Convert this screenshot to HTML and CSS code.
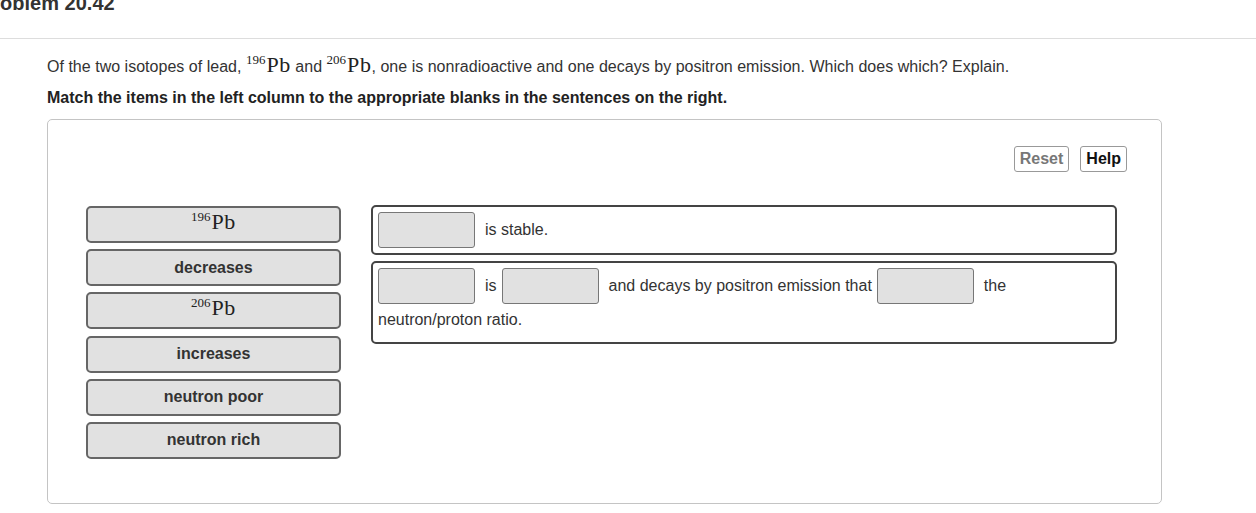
FILE: index.html
```html
<!DOCTYPE html>
<html>
<head>
<meta charset="utf-8">
<link rel="stylesheet" href="styles.css">
</head>
<body>
<header class="top">
  <h1 class="title">Problem 20.42</h1>
</header>
<main class="content">
  <p class="question">Of the two isotopes of lead, <span class="iso"><sup>196</sup>Pb</span> and <span class="iso"><sup>206</sup>Pb</span>, one is nonradioactive and one decays by positron emission. Which does which? Explain.</p>
  <p class="instr">Match the items in the left column to the appropriate blanks in the sentences on the right.</p>
  <section class="panel">
    <div class="toolbar">
      <button class="btn btn-reset">Reset</button>
      <button class="btn btn-help">Help</button>
    </div>
    <div class="work">
      <div class="items">
        <div class="item"><span class="iso"><sup>196</sup>Pb</span></div>
        <div class="item">decreases</div>
        <div class="item"><span class="iso"><sup>206</sup>Pb</span></div>
        <div class="item">increases</div>
        <div class="item">neutron poor</div>
        <div class="item">neutron rich</div>
      </div>
      <div class="sentences">
        <div class="sentence">
          <span class="blank"></span><span class="word">is stable.</span>
        </div>
        <div class="sentence">
          <span class="blank"></span><span class="word">is</span><span class="blank"></span><span class="word">and decays by positron emission that</span><span class="blank"></span><span class="word">the</span>
          <span class="line2">neutron/proton ratio.</span>
        </div>
      </div>
    </div>
  </section>
</main>
</body>
</html>
```
FILE: styles.css
```css
* { box-sizing: border-box; }
html, body { margin: 0; padding: 0; background: #fff; }
body {
  font-family: "Liberation Sans", Arial, sans-serif;
  color: #333;
  font-size: 16px;
  overflow: hidden;
}
.top {
  height: 39px;
  border-bottom: 1px solid #ddd;
  overflow: hidden;
}
.title {
  margin: -9px 0 0 -21px;
  font-size: 20px;
  font-weight: bold;
  line-height: 24px;
  color: #333;
}
.content {
  padding-left: 47px;
  width: 1162px;
}
.question {
  margin: 13px 0 0 0;
  line-height: 26px;
  color: #333;
  letter-spacing: 0.02px;
}
.iso {
  font-family: "Liberation Serif", "Times New Roman", serif;
  font-size: 22px;
  font-weight: normal;
  letter-spacing: 0.6px;
  color: #222;
}
.iso sup {
  font-size: 13px;
  letter-spacing: 0;
  vertical-align: 0;
  position: relative;
  top: -8px;
  margin-right: 1px;
}
.instr {
  margin: 7px 0 0 0;
  font-weight: bold;
  line-height: 20px;
  color: #222;
}
.panel {
  margin-top: 11px;
  border: 1px solid #c4c4c4;
  border-radius: 5px;
  height: 385px;
  padding: 26px 34px 0 38px;
}
.toolbar {
  display: flex;
  justify-content: flex-end;
  gap: 11px;
}
.btn {
  font-family: "Liberation Sans", Arial, sans-serif;
  font-weight: bold;
  font-size: 16px;
  background: #fff;
  border: 1px solid #999;
  border-radius: 3px;
  height: 26px;
  padding: 0 5px;
  line-height: 22px;
}
.btn-reset { color: #777; }
.btn-help { color: #111; }
.work {
  display: flex;
  gap: 30px;
  margin-top: 33px;
}
.items {
  width: 255px;
  display: flex;
  flex-direction: column;
  gap: 6.2px;
  margin-top: 1px;
}
.item {
  height: 37px;
  background: #e1e1e1;
  border: 2px solid #666;
  border-radius: 5px;
  display: flex;
  align-items: center;
  justify-content: center;
  font-weight: bold;
  font-size: 16px;
  color: #333;
}
.item .iso { font-size: 22px; margin-top: -5px; }
.sentences {
  width: 746px;
  display: flex;
  flex-direction: column;
  gap: 6px;
}
.sentence {
  border: 2px solid #444;
  border-radius: 5px;
  padding: 5px 5px 5px 5px;
  display: flex;
  flex-wrap: wrap;
  align-items: center;
}
.blank {
  width: 97px;
  height: 36px;
  background: #e1e1e1;
  border: 1px solid #777;
  border-radius: 3px;
  margin-right: 10px;
}
.word {
  margin-right: 5px;
  color: #333;
  line-height: 36px;
}
.line2 {
  flex-basis: 100%;
  line-height: 32px;
  padding-bottom: 1px;
}
```
